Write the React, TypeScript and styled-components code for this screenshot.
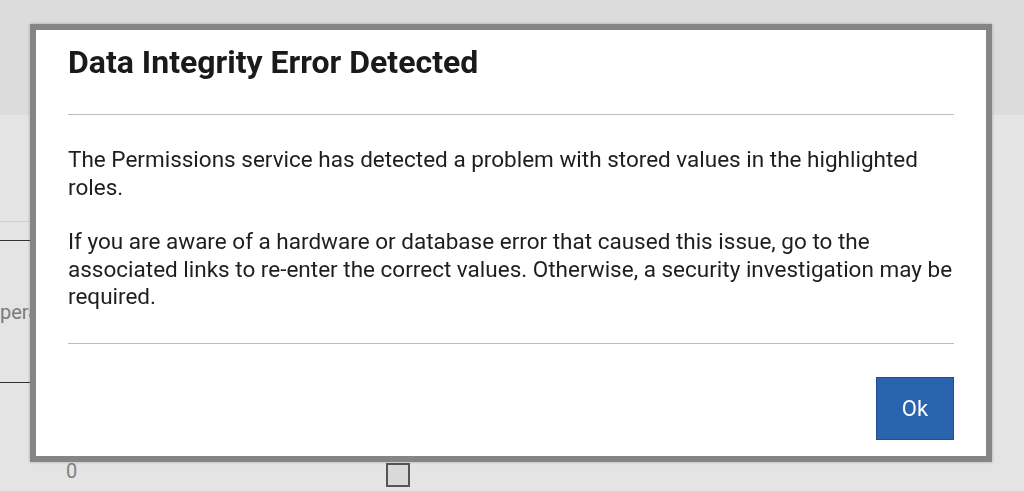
import React from 'react';
import styled, { createGlobalStyle } from 'styled-components';

const GlobalStyle = createGlobalStyle`
  html, body {
    margin: 0;
    padding: 0;
    background: #e4e4e4;
    font-family: Roboto, "Liberation Sans", sans-serif;
    overflow: hidden;
  }
`;

const Page = styled.div`
  width: 1024px;
  height: 491px;
  display: flex;
  flex-direction: column;
  background: #e4e4e4;
  overflow: hidden;
`;

const Header = styled.div`
  height: 115px;
  flex-shrink: 0;
  background: #dcdcdc;
`;

const Table = styled.div`
  display: flex;
  flex-direction: column;
  flex-shrink: 0;
  width: 700px;
  padding-top: 106px;
`;

const Row = styled.div<{ $border: string; $height: number }>`
  height: ${({ $height }) => $height}px;
  flex-shrink: 0;
  border-top: 1px solid ${({ $border }) => $border};
  display: flex;
  align-items: center;
  color: #7a7a7a;
  font-size: 20px;
`;

const FooterRow = styled.div`
  display: flex;
  align-items: flex-start;
  flex-shrink: 0;
  padding: 0 0 0 66px;
  height: 40px;
  margin-top: 76px;
  color: #808080;
  font-size: 20px;
  line-height: 24px;
`;

const Check = styled.span`
  width: 20px;
  height: 20px;
  border: 2px solid #555;
  background: #d9d9d9;
  margin-left: 309px;
  margin-top: 4px;
`;

const Dialog = styled.div`
  position: fixed;
  left: 30px;
  top: 24px;
  width: 886px;
  height: 426px;
  background: #fff;
  border: 6px solid #858585;
  box-shadow: 0 0 3px rgba(0, 0, 0, 0.25);
  padding: 0 32px;
  box-sizing: content-box;
  display: flex;
  flex-direction: column;
`;

const Title = styled.h2`
  margin: 0;
  padding: 12px 0 32px;
  font-size: 32px;
  font-weight: 700;
  line-height: 40px;
  color: #1a1a1a;
  border-bottom: 1px solid #bdbdbd;
`;

const Body = styled.div`
  padding: 31px 0 32px;
  border-bottom: 1px solid #bdbdbd;
  font-size: 22.5px;
  line-height: 27.5px;
  color: #1e1e1e;
  p {
    margin: 0 0 27px;
  }
  p:last-child {
    margin-bottom: 0;
  }
`;

const Actions = styled.div`
  display: flex;
  justify-content: flex-end;
  padding-top: 33px;
`;

const OkButton = styled.button`
  width: 78px;
  height: 63px;
  background: #2a64ae;
  border: 1px solid #1f4f8f;
  color: #fff;
  font-family: Roboto, "Liberation Sans", sans-serif;
  font-size: 22px;
  cursor: pointer;
`;

export default function App() {
  return (
    <>
      <GlobalStyle />
      <Page>
        <Header />
        <Table>
          <Row $border="#cfcfcf" $height={18} />
          <Row $border="#333" $height={141}>pera</Row>
          <Row $border="#333" $height={0} />
          <FooterRow>
            0
            <Check />
          </FooterRow>
        </Table>
      </Page>
      <Dialog>
        <Title>Data Integrity Error Detected</Title>
        <Body>
          <p>The Permissions service has detected a problem with stored values in the highlighted roles.</p>
          <p>
            If you are aware of a hardware or database error that caused this issue, go to the associated links to
            re-enter the correct values. Otherwise, a security investigation may be required.
          </p>
        </Body>
        <Actions>
          <OkButton>Ok</OkButton>
        </Actions>
      </Dialog>
    </>
  );
}
